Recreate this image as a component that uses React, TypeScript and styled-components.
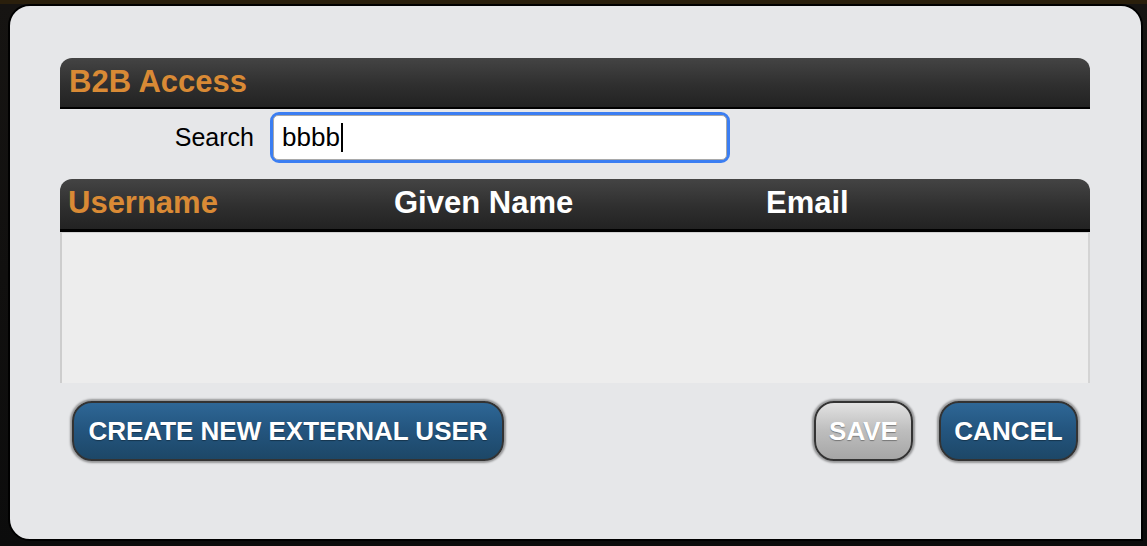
import * as React from 'react';
import styled, {createGlobalStyle} from 'styled-components';

const GlobalStyle = createGlobalStyle`
  html, body {
    margin: 0;
    padding: 0;
    background: #141210;
  }
  body {
    font-family: "Liberation Sans", Arial, sans-serif;
  }
`;

const Backdrop = styled.div`
  box-sizing: border-box;
  width: 1147px;
  height: 546px;
  padding: 4px 4px 5px 8px;
  background: linear-gradient(#2a1f0c 0, #2a1f0c 4px, #161412 4px, #0c0c0c 100%);
`;

const Dialog = styled.div`
  box-sizing: border-box;
  width: 1135px;
  height: 537px;
  background: #e6e7e9;
  border: 2px solid #000;
  border-radius: 22px 22px 0 22px;
  padding: 52px 51px 0 50px;
  display: flex;
  flex-direction: column;
`;

const TitleBar = styled.div`
  box-sizing: border-box;
  height: 51px;
  padding-left: 9px;
  padding-bottom: 2px;
  display: flex;
  align-items: center;
  border-radius: 12px 12px 0 0;
  border-bottom: 2px solid #000;
  background: linear-gradient(#444 0%, #2f2f2f 55%, #222 100%);
  color: #d98a35;
  font-size: 31px;
  font-weight: bold;
`;

const SearchRow = styled.div`
  height: 70px;
  display: flex;
  align-items: flex-start;
  padding-top: 3px;
  box-sizing: border-box;
`;

const SearchLabel = styled.label`
  width: 194px;
  height: 51px;
  line-height: 51px;
  text-align: right;
  font-size: 25px;
  color: #000;
  margin-right: 16px;
`;

const FocusRing = styled.div`
  box-sizing: border-box;
  width: 460px;
  height: 51px;
  border: 3px solid #3b7ef2;
  border-radius: 9px;
  background: #3b7ef2;
`;

const SearchBox = styled.div`
  box-sizing: border-box;
  height: 100%;
  border: 1px solid #a9a9a9;
  border-radius: 5px;
  background: #fff;
  padding-left: 8px;
  display: flex;
  align-items: center;
  font-size: 26px;
  color: #000;
`;

const Caret = styled.span`
  display: inline-block;
  width: 2px;
  height: 29px;
  background: #000;
  margin-left: 1px;
`;

const HeaderRow = styled.div`
  display: grid;
  grid-template-columns: 315px 365px 350px;
  height: 53px;
`;

const HeaderCell = styled.div<{ $pad: number; $active?: boolean; $first?: boolean; $last?: boolean }>`
  box-sizing: border-box;
  display: flex;
  align-items: center;
  padding-left: ${(p) => p.$pad}px;
  padding-bottom: 3px;
  background: linear-gradient(#444 0%, #2f2f2f 55%, #222 100%);
  border-bottom: 3px solid #000;
  border-radius: ${(p) => (p.$first ? '12px 0 0 0' : p.$last ? '0 12px 0 0' : '0')};
  color: ${(p) => (p.$active ? '#d98a35' : '#fff')};
  font-size: 31px;
  font-weight: bold;
`;

const TableBody = styled.div`
  height: 151px;
  background: #ededed;
  border-left: 2px solid #cdcdcd;
  border-right: 2px solid #d4d4d4;
  border-top: 1px solid #d2d2d2;
  box-sizing: border-box;
`;

const Footer = styled.div`
  display: flex;
  align-items: center;
  padding: 18px 12px 0 12px;
`;

const Spacer = styled.div`
  flex: 1;
`;

const Button = styled.button<{ $variant: 'blue' | 'grey'; $width: number }>`
  box-sizing: border-box;
  width: ${(p) => p.$width}px;
  height: 60px;
  border: 2px solid #333;
  border-radius: 20px;
  box-shadow: 0 0 2px 2px rgba(0, 0, 0, 0.35);
  background: ${(p) =>
    p.$variant === 'blue'
      ? 'linear-gradient(#2e6796 0%, #245680 45%, #1d4767 100%)'
      : 'linear-gradient(#e2e2e2 0%, #bdbdbd 50%, #a6a6a6 100%)'};
  color: #fff;
  font-family: "Liberation Sans", Arial, sans-serif;
  font-size: 26px;
  font-weight: bold;
  text-shadow: 0 1px 1px rgba(0, 0, 0, 0.35);
  padding: 0;
  cursor: pointer;
  & + & {
    margin-left: 26px;
  }
`;

export default function App() {
  return (
    <>
      <GlobalStyle />
      <Backdrop>
        <Dialog>
          <TitleBar>B2B Access</TitleBar>
          <SearchRow>
            <SearchLabel>Search</SearchLabel>
            <FocusRing>
              <SearchBox>
                bbbb
                <Caret />
              </SearchBox>
            </FocusRing>
          </SearchRow>
          <HeaderRow>
            <HeaderCell $pad={8} $active $first>Username</HeaderCell>
            <HeaderCell $pad={19}>Given Name</HeaderCell>
            <HeaderCell $pad={26} $last>Email</HeaderCell>
          </HeaderRow>
          <TableBody />
          <Footer>
            <Button $variant="blue" $width={432}>CREATE NEW EXTERNAL USER</Button>
            <Spacer />
            <Button $variant="grey" $width={99}>SAVE</Button>
            <Button $variant="blue" $width={139}>CANCEL</Button>
          </Footer>
        </Dialog>
      </Backdrop>
    </>
  );
}
